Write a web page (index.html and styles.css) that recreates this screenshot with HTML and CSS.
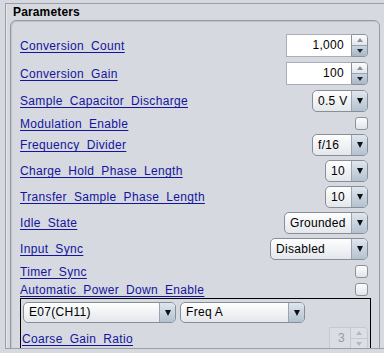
FILE: index.html
```html
<!DOCTYPE html>
<html>
<head>
<meta charset="utf-8">
<link rel="stylesheet" href="styles.css">
</head>
<body>
<div class="frame">
  <div class="frame-title">Parameters</div>
  <div class="panel">
    <div class="row gap-5">
      <a class="param" href="#">Conversion_Count</a>
      <div class="spinner">
        <div class="spin-field">1,000</div>
        <div class="spin-buttons"><span class="spin-up"><i></i></span><span class="spin-down"><i></i></span></div>
      </div>
    </div>
    <div class="row gap-5">
      <a class="param" href="#">Conversion_Gain</a>
      <div class="spinner">
        <div class="spin-field">100</div>
        <div class="spin-buttons"><span class="spin-up"><i></i></span><span class="spin-down"><i></i></span></div>
      </div>
    </div>
    <div class="row choice gap-5">
      <a class="param" href="#">Sample_Capacitor_Discharge</a>
      <div class="combo w-56"><span class="combo-value">0.5 V</span><span class="combo-btn"><i></i></span></div>
    </div>
    <div class="row short gap-4">
      <a class="param" href="#">Modulation_Enable</a>
      <span class="check"></span>
    </div>
    <div class="row choice gap-4">
      <a class="param" href="#">Frequency_Divider</a>
      <div class="combo w-56"><span class="combo-value">f/16</span><span class="combo-btn"><i></i></span></div>
    </div>
    <div class="row choice gap-4">
      <a class="param" href="#">Charge_Hold_Phase_Length</a>
      <div class="combo w-43"><span class="combo-value">10</span><span class="combo-btn"><i></i></span></div>
    </div>
    <div class="row choice gap-4">
      <a class="param" href="#">Transfer_Sample_Phase_Length</a>
      <div class="combo w-43"><span class="combo-value">10</span><span class="combo-btn"><i></i></span></div>
    </div>
    <div class="row choice gap-4">
      <a class="param" href="#">Idle_State</a>
      <div class="combo w-84"><span class="combo-value">Grounded</span><span class="combo-btn"><i></i></span></div>
    </div>
    <div class="row choice gap-5">
      <a class="param" href="#">Input_Sync</a>
      <div class="combo w-98"><span class="combo-value">Disabled</span><span class="combo-btn"><i></i></span></div>
    </div>
    <div class="row short gap-5">
      <a class="param" href="#">Timer_Sync</a>
      <span class="check"></span>
    </div>
    <div class="row short gap-2">
      <a class="param" href="#">Automatic_Power_Down_Enable</a>
      <span class="check"></span>
    </div>
    <div class="group">
      <div class="group-selects">
        <div class="combo small w-153"><span class="combo-value">E07(CH11)</span><span class="combo-btn"><i></i></span></div>
        <div class="combo small w-125"><span class="combo-value">Freq A</span><span class="combo-btn"><i></i></span></div>
      </div>
      <div class="row group-row">
        <a class="param" href="#">Coarse_Gain_Ratio</a>
        <div class="spinner disabled">
          <div class="spin-field">3</div>
          <div class="spin-buttons"><span class="spin-up"><i></i></span><span class="spin-down"><i></i></span></div>
        </div>
      </div>
    </div>
  </div>
</div>
</body>
</html>
```

FILE: styles.css
```css
html, body {
  margin: 0;
  padding: 0;
  background: #d6d9df;
  overflow: hidden;
  font-family: "Liberation Sans", Arial, sans-serif;
  font-size: 12px;
  color: #000;
}

.frame {
  margin: 3px 0 0 5px;
  height: 346px;
  box-sizing: border-box;
  border: 1px solid #9a9fa7;
  border-right: none;
  box-shadow: inset 1px 0 0 #e4e7eb;
  overflow: hidden;
}

.frame-title {
  height: 16px;
  line-height: 16px;
  padding-left: 7px;
  font-weight: bold;
  letter-spacing: 0.15px;
  color: #000;
}

.panel {
  margin-left: 4px;
  width: 370px;
  height: 400px;
  box-sizing: border-box;
  border: 1px solid #959aa2;
  border-radius: 6px;
  box-shadow: inset 1px 1px 0 #bfc3ca;
  padding: 13px 11px 0 9px;
}

.row {
  display: flex;
  align-items: center;
  justify-content: space-between;
  height: 23px;
}
.row.choice { height: 22px; }
.row.short { height: 13px; }
.gap-5 { margin-bottom: 5px; }
.gap-4 { margin-bottom: 4px; }
.gap-2 { margin-bottom: 2px; }

.param {
  color: #14149e;
  text-decoration: underline;
  text-decoration-thickness: 1px;
  text-underline-offset: 2px;
  letter-spacing: 0.33px;
  white-space: nowrap;
  line-height: 14px;
}

/* spinner */
.spinner {
  display: flex;
  height: 23px;
  width: 82px;
}
.spin-field {
  width: 65px;
  box-sizing: border-box;
  border: 1px solid #a9aeb6;
  border-right: none;
  background: #fff;
  text-align: right;
  padding-right: 7px;
  line-height: 21px;
  font-size: 12px;
  letter-spacing: 0.3px;
}
.spin-buttons {
  flex: 1;
  display: flex;
  flex-direction: column;
  border: 1px solid #8a919a;
  border-radius: 0 4px 4px 0;
  overflow: hidden;
}
.spin-up, .spin-down {
  flex: 1;
  display: flex;
  align-items: center;
  justify-content: center;
}
.spin-up {
  background: linear-gradient(#fbfcfd, #e2e6ea);
  border-bottom: 1px solid #9aa3ad;
}
.spin-down {
  background: linear-gradient(#c9d4df, #a9b7c6);
}
.spin-up i {
  width: 0; height: 0;
  border-left: 3px solid transparent;
  border-right: 3px solid transparent;
  border-bottom: 4px solid #8a9098;
}
.spin-down i {
  width: 0; height: 0;
  border-left: 3px solid transparent;
  border-right: 3px solid transparent;
  border-top: 4px solid #1c2530;
}

.spinner.disabled { width: 39px; }
.spinner.disabled .spin-field {
  width: 21px;
  background: #dadde2;
  border-color: #c6cad0;
  color: #959ba4;
  padding-right: 5px;
}
.spinner.disabled .spin-buttons {
  border-color: #c6cad0;
}
.spinner.disabled .spin-up,
.spinner.disabled .spin-down {
  background: #dcdfe4;
  border-color: #c6cad0;
}
.spinner.disabled .spin-up i { border-bottom-color: #b4b9c0; }
.spinner.disabled .spin-down i { border-top-color: #b4b9c0; }

/* combo */
.combo {
  display: flex;
  height: 22px;
  box-sizing: border-box;
  border: 1px solid #878e97;
  border-radius: 5px;
  background: linear-gradient(#fefefe, #e4e7eb);
  overflow: hidden;
}
.combo.small { height: 21px; }
.combo-value {
  flex: 1;
  padding-left: 5px;
  line-height: 20px;
  font-size: 12px;
  letter-spacing: 0.3px;
  white-space: nowrap;
}
.combo.small .combo-value { line-height: 19px; }
.combo-btn {
  width: 15px;
  border-left: 1px solid #9ba5b1;
  background: linear-gradient(#dfe6ee, #b3c1d0);
  display: flex;
  align-items: center;
  justify-content: center;
}
.combo-btn i {
  width: 0; height: 0;
  border-left: 3px solid transparent;
  border-right: 3px solid transparent;
  border-top: 6px solid #111;
}
.w-43 { width: 43px; }
.w-56 { width: 56px; }
.w-84 { width: 84px; }
.w-98 { width: 98px; }
.w-125 { width: 125px; }
.w-153 { width: 153px; }

/* checkbox */
.check {
  width: 13px;
  height: 13px;
  box-sizing: border-box;
  border: 1px solid #8d939c;
  border-radius: 3px;
  background: linear-gradient(#fdfdfe, #e1e5ea);
}

/* group */
.group {
  width: 351px;
  margin-right: -3px;
  box-sizing: border-box;
  border: 1px solid #000;
  padding: 3px 2px 0 2px;
  height: 80px;
}
.group-selects {
  display: flex;
  gap: 4px;
  margin-bottom: 4px;
}
.group-row .param { margin-left: -1px; }
```
